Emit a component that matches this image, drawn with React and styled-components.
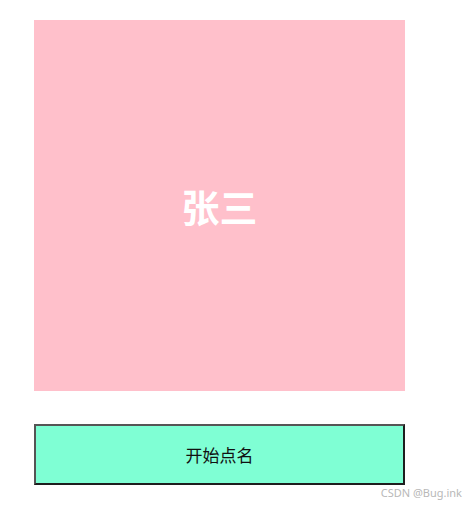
import React, { useState } from 'react'
import styled, { createGlobalStyle } from 'styled-components'

const Global = createGlobalStyle`
    body {
        margin: 0;
        background: #fff;
        font-family: "Noto Sans CJK SC", "Liberation Sans", sans-serif;
    }
`;

const Page = styled.div`
    position: relative;
    width: 474px;
    height: 508px;
    padding: 20px 0 0 34px;
    box-sizing: border-box;
    display: flex;
    flex-direction: column;
    gap: 33px;
`;

const NameBox = styled.div`
    width: 371px;
    height: 371px;
    background-color: pink;
    display: flex;
    align-items: center;
    justify-content: center;
    color: #fff;
    font-size: 38px;
    font-weight: 700;
`;

const StartButton = styled.button`
    width: 371px;
    height: 61px;
    background-color: aquamarine;
    border: 2px solid;
    border-color: #555 #1e1e1e #1e1e1e #555;
    box-sizing: border-box;
    font-family: "Noto Sans CJK SC", sans-serif;
    font-size: 17px;
    color: #111;
    cursor: pointer;
`;

const Watermark = styled.span`
    position: absolute;
    right: 12px;
    bottom: 8px;
    font-family: "Noto Sans", "Liberation Sans", sans-serif;
    font-size: 11px;
    color: #b8b8b8;
`;

const names = ['张三', '李四', '王五', '赵六']

const App = () => {
    const [name] = useState(names[0])

    return (
        <>
            <Global />
            <Page>
                <NameBox>{name}</NameBox>
                <StartButton>开始点名</StartButton>
                <Watermark>CSDN @Bug.ink</Watermark>
            </Page>
        </>
    )
}

export default App
